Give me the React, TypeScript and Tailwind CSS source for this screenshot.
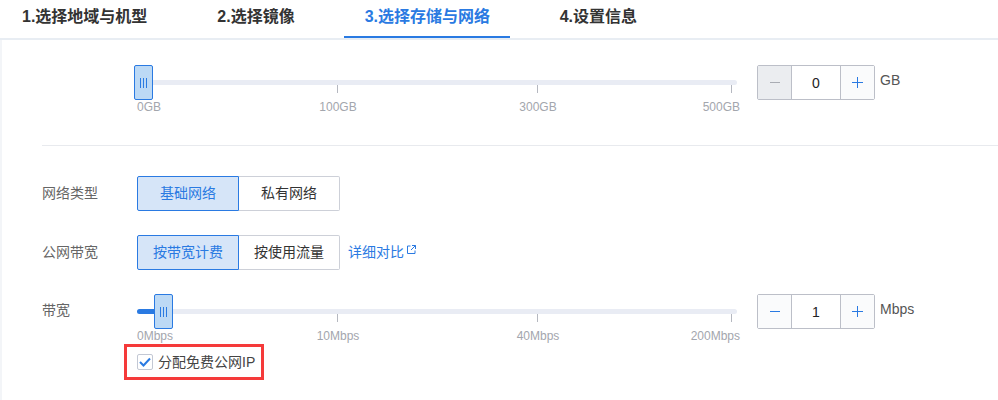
import React from "react";

const Handle = () => (
  <div className="absolute top-[-15px] w-[19px] h-[35px] rounded-[2px] border border-[#2a7ae2] bg-[#bcd9f5] flex items-center justify-center gap-[2px] left-[var(--l)]">
    <span className="w-px h-[10px] bg-[#2a7ae2]" />
    <span className="w-px h-[10px] bg-[#2a7ae2]" />
    <span className="w-px h-[10px] bg-[#2a7ae2]" />
  </div>
);

function Slider({ labels, fill, left }: { labels: string[]; fill: number; left: number }) {
  return (
    <div className="relative w-[600px] h-[5px] rounded-[3px] bg-[#e9ecf4]">
      {fill > 0 && <div className="absolute left-0 top-0 h-[5px] rounded-l-[3px] bg-[#2a7ae2]" style={{ width: fill }} />}
      <div style={{ "--l": `${left}px` } as React.CSSProperties}>
        <Handle />
      </div>
      <span className="absolute left-[200px] top-[5px] w-px h-[8px] bg-[#b5b8c0]" />
      <span className="absolute left-[400px] top-[5px] w-px h-[8px] bg-[#b5b8c0]" />
      <span className="absolute left-[594px] top-[5px] w-px h-[8px] bg-[#b5b8c0]" />
      <div className="absolute left-0 top-[19px] w-[603px] h-[16px] text-[12px] leading-[16px] text-[#a3a6ad]">
        <span className="absolute left-0">{labels[0]}</span>
        <span className="absolute left-[201px] -translate-x-1/2">{labels[1]}</span>
        <span className="absolute left-[401px] -translate-x-1/2">{labels[2]}</span>
        <span className="absolute right-0">{labels[3]}</span>
      </div>
    </div>
  );
}

function Stepper({ value, unit, disabled }: { value: string; unit: string; disabled?: boolean }) {
  return (
    <div className="flex items-start">
      <div className="flex h-[35px] w-[118px] rounded-[2px] border border-[#bcbfc8] text-[14px]">
        <div className={`w-[34px] flex items-center justify-center border-r border-[#bcbfc8] ${disabled ? "bg-[#ebedf0]" : "bg-[#fafbfc]"}`}>
          <span className={`w-[10px] h-px ${disabled ? "bg-[#a9acb3]" : "bg-[#2a7ae2]"}`} />
        </div>
        <div className="flex-1 flex items-center justify-center pt-[1px] text-[#222]">{value}</div>
        <div className="w-[34px] flex items-center justify-center border-l border-[#bcbfc8] bg-[#fafbfc]">
          <svg width="11" height="11" viewBox="0 0 11 11">
            <path d="M5.5 0v11M0 5.5h11" stroke="#2a7ae2" strokeWidth="1" fill="none" />
          </svg>
        </div>
      </div>
      <span className="ml-[5px] mt-[6px] text-[14px] leading-[18px] text-[#555]">{unit}</span>
    </div>
  );
}

function Segment({ on, off }: { on: string; off: string }) {
  return (
    <div className="flex h-[35px] w-[203px] text-[14px]">
      <div className="w-[102px] flex items-center justify-center rounded-l-[2px] border border-[#2a7ae2] bg-[#d6e5f8] text-[#2a7ae2]">{on}</div>
      <div className="w-[101px] flex items-center justify-center rounded-r-[2px] border border-l-0 border-[#cdd0d8] text-[#333]">{off}</div>
    </div>
  );
}

const tabs = ["1.选择地域与机型", "2.选择镜像", "3.选择存储与网络", "4.设置信息"];

export default function App() {
  return (
    <div
      className="w-[998px] h-[400px] overflow-hidden bg-white"
      style={{ fontFamily: '"Liberation Sans", "Noto Sans CJK SC", sans-serif' }}
    >
      <div className="h-[40px] pl-px flex gap-[28px] border-b-2 border-[#e8edf3]">
        {tabs.map((t, i) => (
          <div
            key={t}
            className={`h-[38px] shrink-0 whitespace-nowrap pt-[5px] text-[16px] leading-[24px] font-bold ${
              i === 2
                ? "w-[166px] pl-[21px] text-[#2a7ae2] border-b-2 border-[#2a7ae2]"
                : i === 3
                  ? "pl-[22px] text-[#333]"
                  : "px-[21px] text-[#333]"
            }`}
          >
            {t}
          </div>
        ))}
      </div>
      <div className="h-[360px] pl-[42px] border-l-2 border-[#f3f5f8]">
        <div className="-ml-[2px]">
          <div className="flex pt-[40px] pl-[95px] h-[105px]">
            <Slider labels={["0GB", "100GB", "300GB", "500GB"]} fill={0} left={-3} />
            <div className="ml-[20px] -mt-[15px]">
              <Stepper value="0" unit="GB" disabled />
            </div>
          </div>
          <div className="h-px bg-[#e8eaee]" />
          <div className="mt-[30px] flex items-center h-[35px]">
            <span className="w-[95px] text-[14px] text-[#666]">网络类型</span>
            <Segment on="基础网络" off="私有网络" />
          </div>
          <div className="mt-[24px] flex items-center h-[35px]">
            <span className="w-[95px] text-[14px] text-[#666]">公网带宽</span>
            <Segment on="按带宽计费" off="按使用流量" />
            <a className="ml-[8px] text-[14px] text-[#2a7ae2] flex items-start">
              详细对比
              <svg className="mt-[3px] ml-[3px]" width="9" height="9" viewBox="0 0 9 9" fill="none" stroke="#2a7ae2" strokeWidth="1">
                <path d="M3.5 1H.5v7.5H8V5.5M5 .5h3.5V4M8.5.5L4 5" />
              </svg>
            </a>
          </div>
          <div className="mt-[24px] flex h-[35px]">
            <span className="w-[95px] text-[14px] leading-[33px] text-[#666]">带宽</span>
            <div className="pt-[15px]">
              <Slider labels={["0Mbps", "10Mbps", "40Mbps", "200Mbps"]} fill={20} left={17} />
            </div>
            <div className="ml-[20px]">
              <Stepper value="1" unit="Mbps" />
            </div>
          </div>
          <div className="ml-[82px] mt-[15px] w-[140px] h-[36px] border-[3px] border-[#f53a3a] flex items-center pl-[10px] text-[14px] text-[#444]">
            <span className="w-[16px] h-[16px] rounded-[2px] border border-[#c3c8d4] flex items-center justify-center mr-[5px]">
              <svg width="12" height="10" viewBox="0 0 12 10" fill="none" stroke="#2a7ae2" strokeWidth="2">
                <path d="M1 5l3.5 3.5L11 1.5" />
              </svg>
            </span>
            分配免费公网IP
          </div>
        </div>
      </div>
    </div>
  );
}
